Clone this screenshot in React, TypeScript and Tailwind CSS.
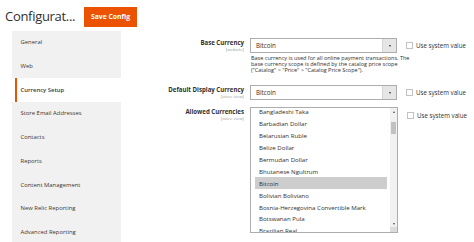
const sections = [
  "General",
  "Web",
  "Currency Setup",
  "Store Email Addresses",
  "Contacts",
  "Reports",
  "Content Management",
  "New Relic Reporting",
  "Advanced Reporting",
];

const currencies = [
  "Bangladeshi Taka",
  "Barbadian Dollar",
  "Belarusian Ruble",
  "Belize Dollar",
  "Bermudan Dollar",
  "Bhutanese Ngultrum",
  "Bitcoin",
  "Bolivian Boliviano",
  "Bosnia-Herzegovina Convertible Mark",
  "Botswanan Pula",
  "Brazilian Real",
];

function Label({ title, scope }: { title: string; scope: string }) {
  return (
    <div className="pr-[6px] text-right">
      <div className="text-[6.1px] font-bold leading-[9px] text-[#303030] whitespace-nowrap">{title}</div>
      <div className="text-[4.3px] leading-[4.5px] text-[#999]">{scope}</div>
    </div>
  );
}

function UseSystem() {
  return (
    <div className="flex h-[15px] items-center gap-[3px] pl-[9px]">
      <span className="h-[7px] w-[7px] border border-[#c2c2c2] bg-white" />
      <span className="text-[6.2px] text-[#303030] whitespace-nowrap">Use system value</span>
    </div>
  );
}

function Select({ value }: { value: string }) {
  return (
    <div className="flex h-[15px] border border-[#adadad] bg-white">
      <div className="flex flex-1 items-center pl-[5px] text-[6.2px] text-[#303030]">{value}</div>
      <div className="flex w-[14px] items-center justify-center border-l border-[#d6d6d6] bg-[#e6e6e6]">
        <span className="h-0 w-0 border-x-[1.5px] border-t-[2px] border-x-transparent border-t-[#303030]" />
      </div>
    </div>
  );
}

export default function App() {
  return (
    <div className="h-[242px] w-[474px] overflow-hidden bg-white font-['Open_Sans',sans-serif] text-[#303030]">
      {/* header */}
      <div className="flex h-[31px] items-start">
        <div className="w-[84px] pl-[5px] pt-[6px] text-[13px] leading-[20px] tracking-[-0.3px] text-[#303030] whitespace-nowrap">
          Configurat...
        </div>
        <button className="mt-[7px] h-[20px] w-[53px] bg-[#eb5202] text-[6.8px] font-bold text-white">
          Save Config
        </button>
      </div>

      <div className="flex">
        {/* sidebar */}
        <div className="ml-[12px] h-[211px] w-[109px] bg-[#f1f1f1]">
          {sections.map((s) =>
            s === "Currency Setup" ? (
              <div key={s} className="flex h-[23.7px] bg-white pl-[3px]">
                <div className="flex items-center border-l-2 border-[#eb5202] pl-[3.5px] text-[5.9px] font-semibold text-[#41362f]">
                  {s}
                </div>
              </div>
            ) : (
              <div key={s} className="flex h-[23.7px] items-center pl-[8.5px] text-[5.9px] text-[#41362f]">
                {s}
              </div>
            )
          )}
        </div>

        {/* form */}
        <div className="flex-1 pt-[7px]">
          <div className="grid grid-cols-[129px_147px_1fr]">
            <Label title="Base Currency" scope="[website]" />
            <div>
              <Select value="Bitcoin" />
              <p className="mt-[2px] pl-[1px] text-[5.5px] leading-[6px] whitespace-nowrap text-[#303030]">
                Base currency is used for all online payment transactions. The
                <br />
                base currency scope is defined by the catalog price scope
                <br />
                ("Catalog" &gt; "Price" &gt; "Catalog Price Scope").
              </p>
            </div>
            <UseSystem />
          </div>

          <div className="mt-[12px] grid grid-cols-[129px_147px_1fr]">
            <Label title="Default Display Currency" scope="[store view]" />
            <Select value="Bitcoin" />
            <UseSystem />
          </div>

          <div className="mt-[7px] grid grid-cols-[129px_148px_1fr]">
            <Label title="Allowed Currencies" scope="[store view]" />
            <div className="flex h-[126px] overflow-hidden border border-[#adadad] bg-white">
              <div className="flex-1 overflow-hidden pl-[4px] pr-[3px]">
                <div className="mt-[-2px]">
                  {currencies.map((c) => (
                    <div
                      key={c}
                      className={`flex h-[11.9px] items-center pl-[4px] text-[6.1px] whitespace-nowrap text-[#303030] ${
                        c === "Bitcoin" ? "bg-[#cdcdcd]" : ""
                      }`}
                    >
                      {c}
                    </div>
                  ))}
                </div>
              </div>
              <div className="flex w-[7px] flex-col bg-[#f1f1f1]">
                <div className="flex h-[7px] items-center justify-center">
                  <span className="h-0 w-0 border-x-[1.5px] border-b-[2px] border-x-transparent border-b-[#505050]" />
                </div>
                <div className="relative flex-1">
                  <div className="absolute left-[1px] right-[1px] top-[7px] h-[12px] bg-[#c1c1c1]" />
                </div>
                <div className="flex h-[7px] items-center justify-center">
                  <span className="h-0 w-0 border-x-[1.5px] border-t-[2px] border-x-transparent border-t-[#505050]" />
                </div>
                <div className="h-[5px] bg-[#dcdcdc]" />
              </div>
            </div>
            <div className="pt-[1px]">
              <UseSystem />
            </div>
          </div>
        </div>
      </div>
    </div>
  );
}
